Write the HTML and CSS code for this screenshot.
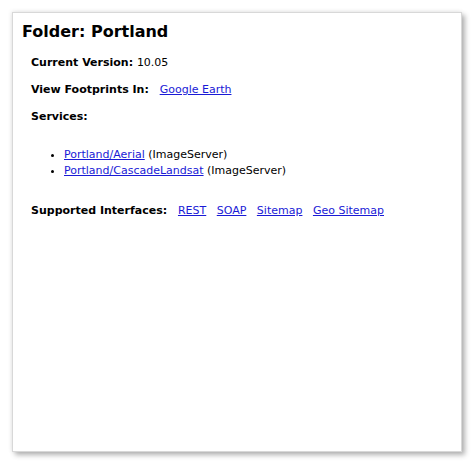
FILE: index.html
```html
<!DOCTYPE html>
<html lang="en">
<head>
  <meta charset="UTF-8">
  <title>Folder: Portland</title>
  <link rel="stylesheet" href="styles.css">
</head>
<body>
  <div class="page">
    <h2>Folder: Portland</h2>
    <div class="rbody">
      <p><b>Current Version: </b>10.05</p>
      <p><b>View Footprints In: </b>&nbsp;&nbsp;<a href="#">Google Earth</a></p>
      <p><b>Services:</b></p>
      <ul>
        <li><a href="#">Portland/Aerial</a> (ImageServer)</li>
        <li><a href="#">Portland/CascadeLandsat</a> (ImageServer)</li>
      </ul>
      <p class="interfaces"><b>Supported Interfaces: </b>&nbsp;&nbsp;<a href="#">REST</a>&nbsp;&nbsp;&nbsp;<a href="#">SOAP</a>&nbsp;&nbsp;&nbsp;<a href="#">Sitemap</a>&nbsp;&nbsp;&nbsp;<a href="#">Geo Sitemap</a></p>
    </div>
  </div>
</body>
</html>
```

FILE: styles.css
```css
body {
  margin: 0;
  background: #ffffff;
  font-family: "DejaVu Sans", Verdana, sans-serif;
  font-size: 11px;
  line-height: 13px;
  color: #000;
}

.page {
  margin: 12px;
  width: 430px;
  height: 420px;
  padding: 9px;
  background: #fff;
  border: 1px solid #d8d8d8;
  box-shadow: 3px 3px 5px rgba(0, 0, 0, 0.3), -1px -1px 4px rgba(0, 0, 0, 0.08);
}

h2 {
  margin: 0 0 14px 0;
  font-size: 16px;
  line-height: 20px;
  font-weight: bold;
}

.rbody {
  padding-left: 9px;
}

p {
  margin: 0 0 14px 0;
}

ul {
  margin: 24px 0 0 0;
  padding-left: 33px;
}

li {
  line-height: 16px;
}

a {
  color: #1a1ad6;
}

.interfaces {
  margin-top: 25px;
}
```
